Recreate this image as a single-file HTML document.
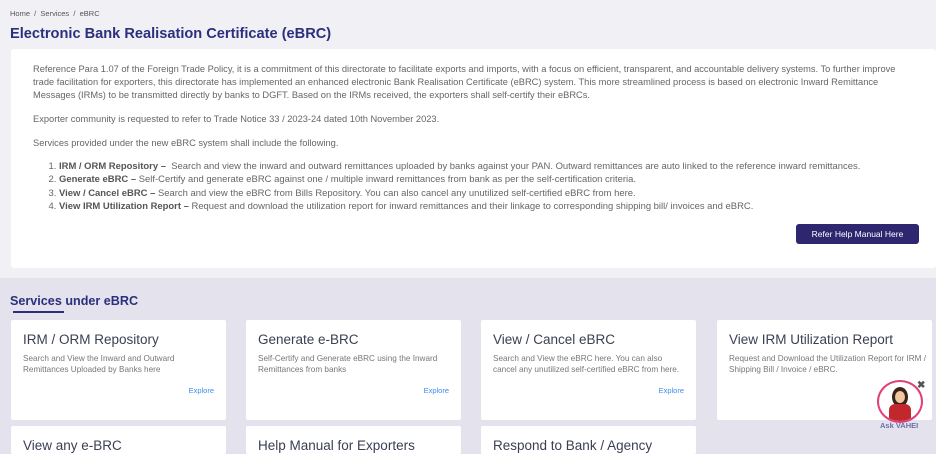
<!DOCTYPE html>
<html><head><meta charset="utf-8"><style>
*{margin:0;padding:0;box-sizing:border-box}
html,body{width:936px;height:454px;overflow:hidden}
body{background:#f1f1f5;font-family:"Liberation Sans",sans-serif;position:relative}
.bc{position:absolute;left:10px;top:9px;font-size:7.5px;color:#555}
h1{position:absolute;left:10px;top:26px;font-size:14.6px;color:#2b2f7e;font-weight:bold}
.box{position:absolute;left:11px;top:49px;width:925px;height:219px;background:#fff;border-radius:3px}
.p{position:absolute;left:33px;font-size:9.3px;color:#666;line-height:13px;width:885px}
ol{position:absolute;left:47px;top:160px;font-size:9.45px;color:#666;line-height:13.3px;white-space:nowrap}
ol li{margin-left:12px}
ol b{color:#555}
.btn{position:absolute;left:796px;top:224px;width:123px;height:20px;background:#2f2670;border-radius:3px;color:#fff;font-size:8.5px;text-align:center;line-height:20px}
.low{position:absolute;left:0;top:278px;width:936px;height:176px;background:#e4e2ec}
.st{position:absolute;left:10px;top:294px;font-size:12.6px;color:#2b2f7e;font-weight:bold}
.ul{position:absolute;left:13px;top:311px;width:51px;height:2px;background:#2b2f7e}
.card{position:absolute;width:215px;height:100px;background:#fff;border-radius:2px}
.card h3{position:absolute;left:12px;top:12px;font-size:13.5px;color:#3b3f52;font-weight:normal}
.card p{position:absolute;left:12px;top:33px;font-size:8.2px;color:#777;line-height:11px;width:188px}
.card a{position:absolute;right:12px;top:66px;font-size:7.5px;color:#3a8ef0}
</style></head><body>
<div class="bc">Home &nbsp;/ &nbsp;Services &nbsp;/ &nbsp;eBRC</div>
<h1>Electronic Bank Realisation Certificate (eBRC)</h1>
<div class="box"></div>
<div class="p" style="top:63px">Reference Para 1.07 of the Foreign Trade Policy, it is a commitment of this directorate to facilitate exports and imports, with a focus on efficient, transparent, and accountable delivery systems. To further improve trade facilitation for exporters, this directorate has implemented an enhanced electronic Bank Realisation Certificate (eBRC) system. This more streamlined process is based on electronic Inward Remittance Messages (IRMs) to be transmitted directly by banks to DGFT. Based on the IRMs received, the exporters shall self-certify their eBRCs.</div>
<div class="p" style="top:113px">Exporter community is requested to refer to Trade Notice 33 / 2023-24 dated 10th November 2023.</div>
<div class="p" style="top:137px">Services provided under the new eBRC system shall include the following.</div>
<ol>
<li><b>IRM / ORM Repository –</b>&nbsp; Search and view the inward and outward remittances uploaded by banks against your PAN. Outward remittances are auto linked to the reference inward remittances.</li>
<li><b>Generate eBRC –</b> Self-Certify and generate eBRC against one / multiple inward remittances from bank as per the self-certification criteria.</li>
<li><b>View / Cancel eBRC –</b> Search and view the eBRC from Bills Repository. You can also cancel any unutilized self-certified eBRC from here.</li>
<li><b>View IRM Utilization Report –</b> Request and download the utilization report for inward remittances and their linkage to corresponding shipping bill/ invoices and eBRC.</li>
</ol>
<div class="btn">Refer Help Manual Here</div>
<div class="low"></div>
<div class="st">Services under eBRC</div>
<div class="ul"></div>
<div class="card" style="left:11px;top:320px"><h3>IRM / ORM Repository</h3><p>Search and View the Inward and Outward Remittances Uploaded by Banks here</p><a>Explore</a></div>
<div class="card" style="left:246px;top:320px"><h3>Generate e-BRC</h3><p>Self-Certify and Generate eBRC using the Inward Remittances from banks</p><a>Explore</a></div>
<div class="card" style="left:481px;top:320px"><h3>View / Cancel eBRC</h3><p>Search and View the eBRC here. You can also cancel any unutilized self-certified eBRC from here.</p><a>Explore</a></div>
<div class="card" style="left:717px;top:320px"><h3>View IRM Utilization Report</h3><p style="width:200px">Request and Download the Utilization Report for IRM / Shipping Bill / Invoice / eBRC.</p></div>
<div class="card" style="left:11px;top:426px;height:28px"><h3>View any e-BRC</h3></div>
<div class="card" style="left:246px;top:426px;height:28px"><h3>Help Manual for Exporters</h3></div>
<div class="card" style="left:481px;top:426px;height:28px"><h3>Respond to Bank / Agency</h3></div>
<div style="position:absolute;left:877px;top:380px;width:46px;height:43px;border-radius:50%;border:2px solid #e0407a;background:#fff;overflow:hidden">
<div style="position:absolute;left:13px;top:5px;width:16px;height:20px;border-radius:50%;background:#3a2418"></div>
<div style="position:absolute;left:16px;top:9px;width:10px;height:12px;border-radius:50%;background:#f0c8a0"></div>
<div style="position:absolute;left:10px;top:22px;width:22px;height:22px;border-radius:6px 6px 0 0;background:#c0282e"></div>
</div>
<div style="position:absolute;left:917px;top:380px;font-size:10px;color:#555;font-weight:bold">✖</div>
<div style="position:absolute;left:880px;top:421px;font-size:7.5px;color:#6a70a8;font-weight:bold">Ask VAHEI</div>
</body></html>
